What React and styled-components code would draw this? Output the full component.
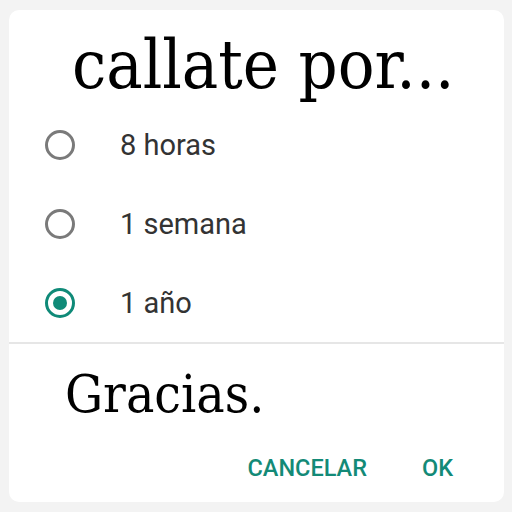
import { useState } from "react";
import styled, { createGlobalStyle } from "styled-components";

const GlobalStyle = createGlobalStyle`
  html, body {
    margin: 0;
    padding: 0;
    background: #f3f3f3;
  }
`;

const Page = styled.div`
  width: 512px;
  height: 512px;
  box-sizing: border-box;
  padding: 10px 8px 10px 9px;
  display: flex;
`;

const Dialog = styled.div`
  flex: 1;
  background: #fff;
  border-radius: 10px;
  display: flex;
  flex-direction: column;
`;

const serif = `"DejaVu Serif Condensed", "DejaVu Serif", serif`;

const Title = styled.h1`
  margin: 0;
  padding: 14px 0 0 63px;
  font-family: ${serif};
  font-stretch: condensed;
  font-weight: normal;
  font-size: 68px;
  line-height: 81px;
  color: #000;
`;

const Options = styled.div`
  display: flex;
  flex-direction: column;
`;

const Option = styled.label`
  display: flex;
  align-items: center;
  height: 79px;
  padding-left: 36px;
  cursor: pointer;
`;

const Radio = styled.span`
  width: 30px;
  height: 30px;
  box-sizing: border-box;
  border-radius: 50%;
  border: 3px solid ${(p) => (p.checked ? "#0f8a78" : "#7a7a7a")};
  display: flex;
  align-items: center;
  justify-content: center;
  margin-right: 45px;

  &::after {
    content: "";
    width: 14px;
    height: 14px;
    border-radius: 50%;
    background: #0f8a78;
    display: ${(p) => (p.checked ? "block" : "none")};
  }
`;

const OptionText = styled.span`
  font-family: Roboto, "Liberation Sans", sans-serif;
  font-size: 29px;
  color: #333;
`;

const Divider = styled.hr`
  margin: 0;
  border: none;
  border-top: 2px solid #e6e6e6;
`;

const Message = styled.p`
  margin: 0;
  padding: 20px 0 0 56px;
  font-family: ${serif};
  font-stretch: condensed;
  font-size: 53px;
  line-height: 60px;
  color: #000;
`;

const Actions = styled.div`
  display: flex;
  justify-content: flex-end;
  gap: 55px;
  padding: 30px 51px 0 0;
`;

const Action = styled.button`
  border: none;
  background: none;
  padding: 0;
  font-family: Roboto, "Liberation Sans", sans-serif;
  font-weight: 500;
  font-size: 23.5px;
  color: #138a77;
  cursor: pointer;
`;

const choices = ["8 horas", "1 semana", "1 año"];

export default function App() {
  const [selected, setSelected] = useState(2);

  return (
    <>
      <GlobalStyle />
      <Page>
        <Dialog>
          <Title>callate por...</Title>
          <Options>
            {choices.map((c, i) => (
              <Option key={c} onClick={() => setSelected(i)}>
                <Radio checked={selected === i} />
                <OptionText>{c}</OptionText>
              </Option>
            ))}
          </Options>
          <Divider />
          <Message>Gracias.</Message>
          <Actions>
            <Action>CANCELAR</Action>
            <Action>OK</Action>
          </Actions>
        </Dialog>
      </Page>
    </>
  );
}
